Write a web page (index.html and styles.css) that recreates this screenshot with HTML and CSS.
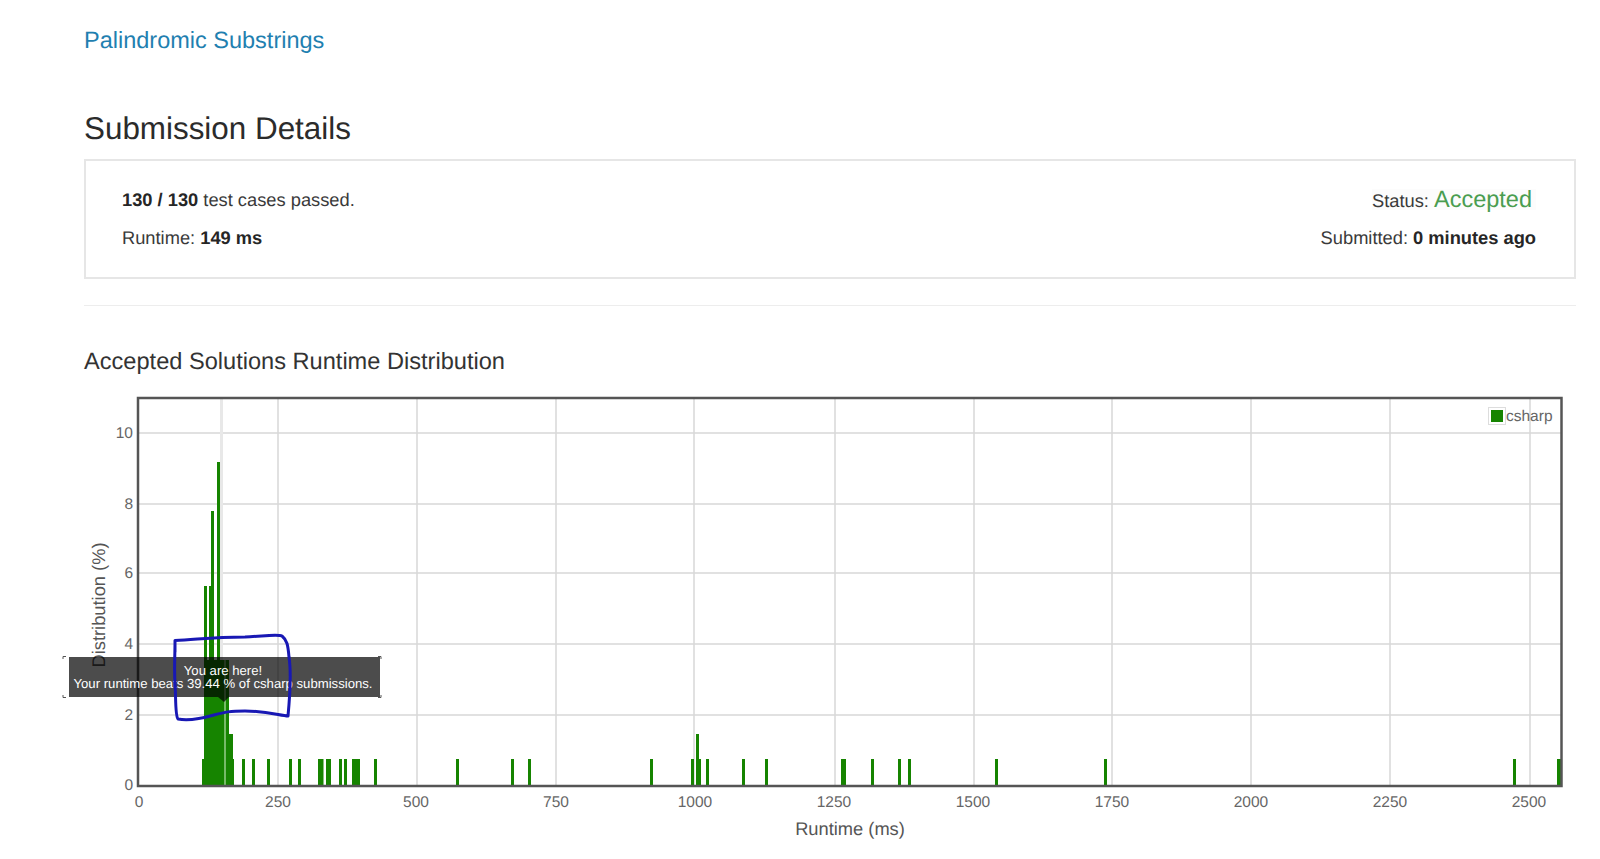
FILE: index.html
```html
<!DOCTYPE html>
<html lang="en">
<head>
<meta charset="utf-8">
<title>Submission Details</title>
<link rel="stylesheet" href="styles.css">
</head>
<body>
<main class="content">
  <a class="problem-link" href="#">Palindromic Substrings</a>
  <h1 class="page-title">Submission Details</h1>
  <section class="panel">
    <div class="panel-col">
      <p class="line"><b>130 / 130</b> test cases passed.</p>
      <p class="line">Runtime: <b>149 ms</b></p>
    </div>
    <div class="panel-col panel-col-right">
      <p class="line status">Status: <span class="accepted">Accepted</span></p>
      <p class="line">Submitted: <b>0 minutes ago</b></p>
    </div>
  </section>
  <hr class="divider">
  <h2 class="chart-title">Accepted Solutions Runtime Distribution</h2>
</main>
<section class="chart">
  <svg class="plot" viewBox="0 380 1600 479" width="1600" height="479" aria-label="Runtime distribution chart">
    <g class="grid">
      <path d="M137 433H1562M137 504H1562M137 573H1562M137 644H1562M137 715H1562"/>
      <path d="M278 397V786M417 397V786M556 397V786M694 397V786M835 397V786M974 397V786M1112 397V786M1251 397V786M1390 397V786M1530 397V786"/>
    </g>
    <path class="marker" d="M221.500 397V786"/>
    <g class="bars">
      <rect x="202" y="759" width="32" height="27"/>
      <rect x="204" y="660" width="25" height="126"/>
      <rect x="229" y="734" width="4" height="52"/>
      <rect x="204" y="586" width="3" height="80"/>
      <rect x="209" y="586" width="3" height="80"/>
      <rect x="211" y="511" width="3" height="150"/>
      <rect x="217" y="462" width="3" height="200"/>
      <rect x="242" y="759" width="3" height="27"/>
      <rect x="252" y="759" width="3" height="27"/>
      <rect x="267" y="759" width="3" height="27"/>
      <rect x="289" y="759" width="3" height="27"/>
      <rect x="298" y="759" width="3" height="27"/>
      <rect x="318" y="759" width="5.500" height="27"/>
      <rect x="326" y="759" width="5" height="27"/>
      <rect x="339" y="759" width="3" height="27"/>
      <rect x="344" y="759" width="3" height="27"/>
      <rect x="352" y="759" width="5" height="27"/>
      <rect x="356" y="759" width="4" height="27"/>
      <rect x="374" y="759" width="3" height="27"/>
      <rect x="456" y="759" width="3" height="27"/>
      <rect x="511" y="759" width="3" height="27"/>
      <rect x="528" y="759" width="3" height="27"/>
      <rect x="650" y="759" width="3" height="27"/>
      <rect x="691" y="759" width="3" height="27"/>
      <rect x="696" y="734" width="3" height="52"/>
      <rect x="699" y="759" width="2" height="27"/>
      <rect x="706" y="759" width="3" height="27"/>
      <rect x="742" y="759" width="3" height="27"/>
      <rect x="765" y="759" width="3" height="27"/>
      <rect x="841" y="759" width="5" height="27"/>
      <rect x="871" y="759" width="3" height="27"/>
      <rect x="898" y="759" width="3" height="27"/>
      <rect x="908" y="759" width="3" height="27"/>
      <rect x="995" y="759" width="3" height="27"/>
      <rect x="1104" y="759" width="3" height="27"/>
      <rect x="1513" y="759" width="3" height="27"/>
      <rect x="1557" y="759" width="4" height="27"/>
    </g>
    <path class="cut" d="M225 660V786"/>
    <rect class="frame" x="138" y="398" width="1423.500" height="388"/>
    <g class="ticks ticks-y">
      <text x="133" y="438">10</text>
      <text x="133" y="509">8</text>
      <text x="133" y="578">6</text>
      <text x="133" y="649">4</text>
      <text x="133" y="720">2</text>
      <text x="133" y="790">0</text>
    </g>
    <g class="ticks ticks-x">
      <text x="139" y="807">0</text>
      <text x="278" y="807">250</text>
      <text x="416" y="807">500</text>
      <text x="556" y="807">750</text>
      <text x="695" y="807">1000</text>
      <text x="834" y="807">1250</text>
      <text x="973" y="807">1500</text>
      <text x="1112" y="807">1750</text>
      <text x="1251" y="807">2000</text>
      <text x="1390" y="807">2250</text>
      <text x="1529" y="807">2500</text>
    </g>
    <text class="axis-label" x="850" y="835">Runtime (ms)</text>
    <text class="axis-label" transform="translate(105 605) rotate(-90)">Distribution (%)</text>
    <rect class="legend-box" x="1488.500" y="407.500" width="17" height="17"/>
    <rect class="legend-swatch" x="1491" y="410" width="12" height="12"/>
    <text class="legend-text" x="1506" y="421">csharp</text>
  </svg>
  <div class="tooltip">You are here!<br>Your runtime beats 39.44 % of csharp submissions.</div>
  <svg class="overlay" viewBox="0 380 1600 479" width="1600" height="479" aria-hidden="true">
    <path class="tooltip-arrow" d="M218 697H229L224 702Z"/>
    <path class="corner" d="M66 656.500H63V659M378 656.500H381V659M66 697.500H63V695M378 697.500H381V695"/>
    <path class="scribble" d="M175 652L175 640.500C195 640 210 637 245 637C265 636 278 634 282 636C287 640 288 645 289 657C291 670 290 695 288 716C281 716 268 711 245 711C230 711 225 712 214 715C200 719 188 721 178 719C175 716 176 697 175 683C174 670 175 655 175 643"/>
  </svg>
</section>
</body>
</html>
```
FILE: styles.css
```css
* { box-sizing: border-box; }
html, body { margin: 0; padding: 0; background: #fff; }
body {
  width: 1600px;
  height: 859px;
  overflow: hidden;
  font-family: "Liberation Sans", Arial, sans-serif;
  color: #333;
  text-rendering: geometricPrecision;
}
.content { padding: 0 24px 0 84px; height: 380px; }
.problem-link {
  display: block;
  padding-top: 26px;
  font-size: 23.500px;
  line-height: 29px;
  color: #1f80b0;
  text-decoration: none;
}
.page-title {
  margin: 55px 0 0;
  font-size: 31.400px;
  line-height: 38px;
  font-weight: 400;
  color: #2b2b2b;
}
.panel {
  display: flex;
  justify-content: space-between;
  height: 120px;
  margin-top: 11px;
  padding: 28px 38px 0 36px;
  border: 2px solid #e6e6e6;
}
.panel-col { display: flex; flex-direction: column; gap: 17px; }
.panel-col-right { align-items: flex-end; }
.line { margin: 0; height: 21px; font-size: 18.300px; line-height: 21px; color: #3a3a3a; }
.line b { color: #262626; }
.status { background: #fcfcfc; padding-right: 4px; }
.accepted { font-size: 23.500px; color: #4a9d50; }
.divider { margin: 26px 0 0; border: 0; border-top: 1px solid #ededed; }
.chart-title {
  margin: 42px 0 0;
  font-size: 23.600px;
  line-height: 28px;
  font-weight: 400;
  color: #333;
}
.chart { position: relative; width: 1600px; height: 479px; }
.plot { display: block; }
.grid path { fill: none; stroke: #d8d8d8; stroke-width: 1.500; }
.marker { fill: none; stroke: #e8e8e8; stroke-width: 3; }
.bars rect { fill: #168400; }
.cut { fill: none; stroke: #d8f0d0; stroke-width: 1; }
.frame { fill: none; stroke: #555; stroke-width: 2.500; }
.ticks text { font-size: 15.500px; fill: #666; }
.ticks-y text { text-anchor: end; }
.ticks-x text { text-anchor: middle; }
.axis-label { font-size: 18.300px; fill: #555; text-anchor: middle; }
.legend-box { fill: #fff; stroke: #ddd; stroke-width: 1; }
.legend-swatch { fill: #168400; }
.legend-text { font-size: 15.500px; fill: #666; }
.tooltip {
  position: absolute;
  left: 69px;
  top: 277px;
  width: 311px;
  height: 40px;
  padding: 7px 3px 0 0;
  background: rgba(0, 0, 0, 0.7);
  color: #fff;
  font-size: 13.150px;
  line-height: 13px;
  text-align: center;
}
.overlay { position: absolute; left: 0; top: 0; pointer-events: none; }
.tooltip-arrow { fill: rgba(0, 0, 0, 0.7); }
.corner { fill: none; stroke: #555; stroke-width: 1; }
.scribble {
  fill: none;
  stroke: #1818b4;
  stroke-width: 3;
  stroke-linecap: round;
  stroke-linejoin: round;
}
```
